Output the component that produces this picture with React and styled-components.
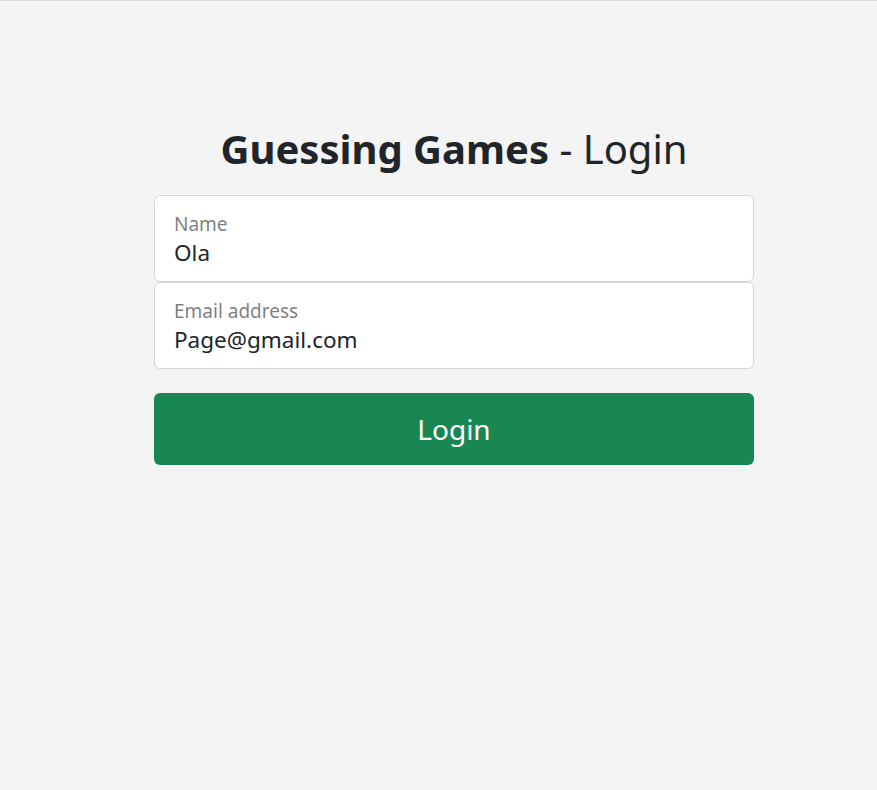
import React from "react";
import styled, { createGlobalStyle } from "styled-components";

const Global = createGlobalStyle`
  html, body { margin: 0; padding: 0; background: #f4f4f4; }
  body { font-family: "Noto Sans", "Open Sans", sans-serif; color: #212529; }
  * { box-sizing: border-box; }
`;

const Page = styled.div`
  min-height: 790px;
  border-top: 1px solid #dcdcdc;
  background: #f4f4f4;
  display: flex;
  padding-left: 154px;
`;

const Container = styled.main`
  width: 600px;
  margin-top: 124px;
  display: flex;
  flex-direction: column;
`;

const Title = styled.h1`
  margin: 0 0 22px;
  text-align: center;
  font-size: 40px;
  font-weight: 400;
  line-height: 1.2;
  color: #212529;
  b { font-weight: 700; }
`;

const Field = styled.label`
  display: flex;
  flex-direction: column;
  height: 87px;
  padding: 15px 19px 0;
  background: #fff;
  border: 1px solid #d3d6da;
  border-radius: 6px;
`;

const FieldLabel = styled.span`
  font-size: 19px;
  line-height: 26px;
  color: rgba(33, 37, 41, 0.6);
`;

const Input = styled.input`
  border: none;
  outline: none;
  padding: 0;
  background: transparent;
  font-family: inherit;
  font-size: 22.5px;
  line-height: 32px;
  color: #212529;
`;

const Button = styled.button`
  margin-top: 24px;
  height: 72px;
  border: none;
  border-radius: 6px;
  background: #198754;
  color: #fff;
  font-family: inherit;
  font-size: 28px;
  cursor: pointer;
`;

export default function App() {
  return (
    <>
      <Global />
      <Page>
        <Container>
          <Title>
            <b>Guessing Games</b> - Login
          </Title>
          <Field>
            <FieldLabel>Name</FieldLabel>
            <Input defaultValue="Ola" />
          </Field>
          <Field>
            <FieldLabel>Email address</FieldLabel>
            <Input type="email" defaultValue="Page@gmail.com" />
          </Field>
          <Button>Login</Button>
        </Container>
      </Page>
    </>
  );
}
